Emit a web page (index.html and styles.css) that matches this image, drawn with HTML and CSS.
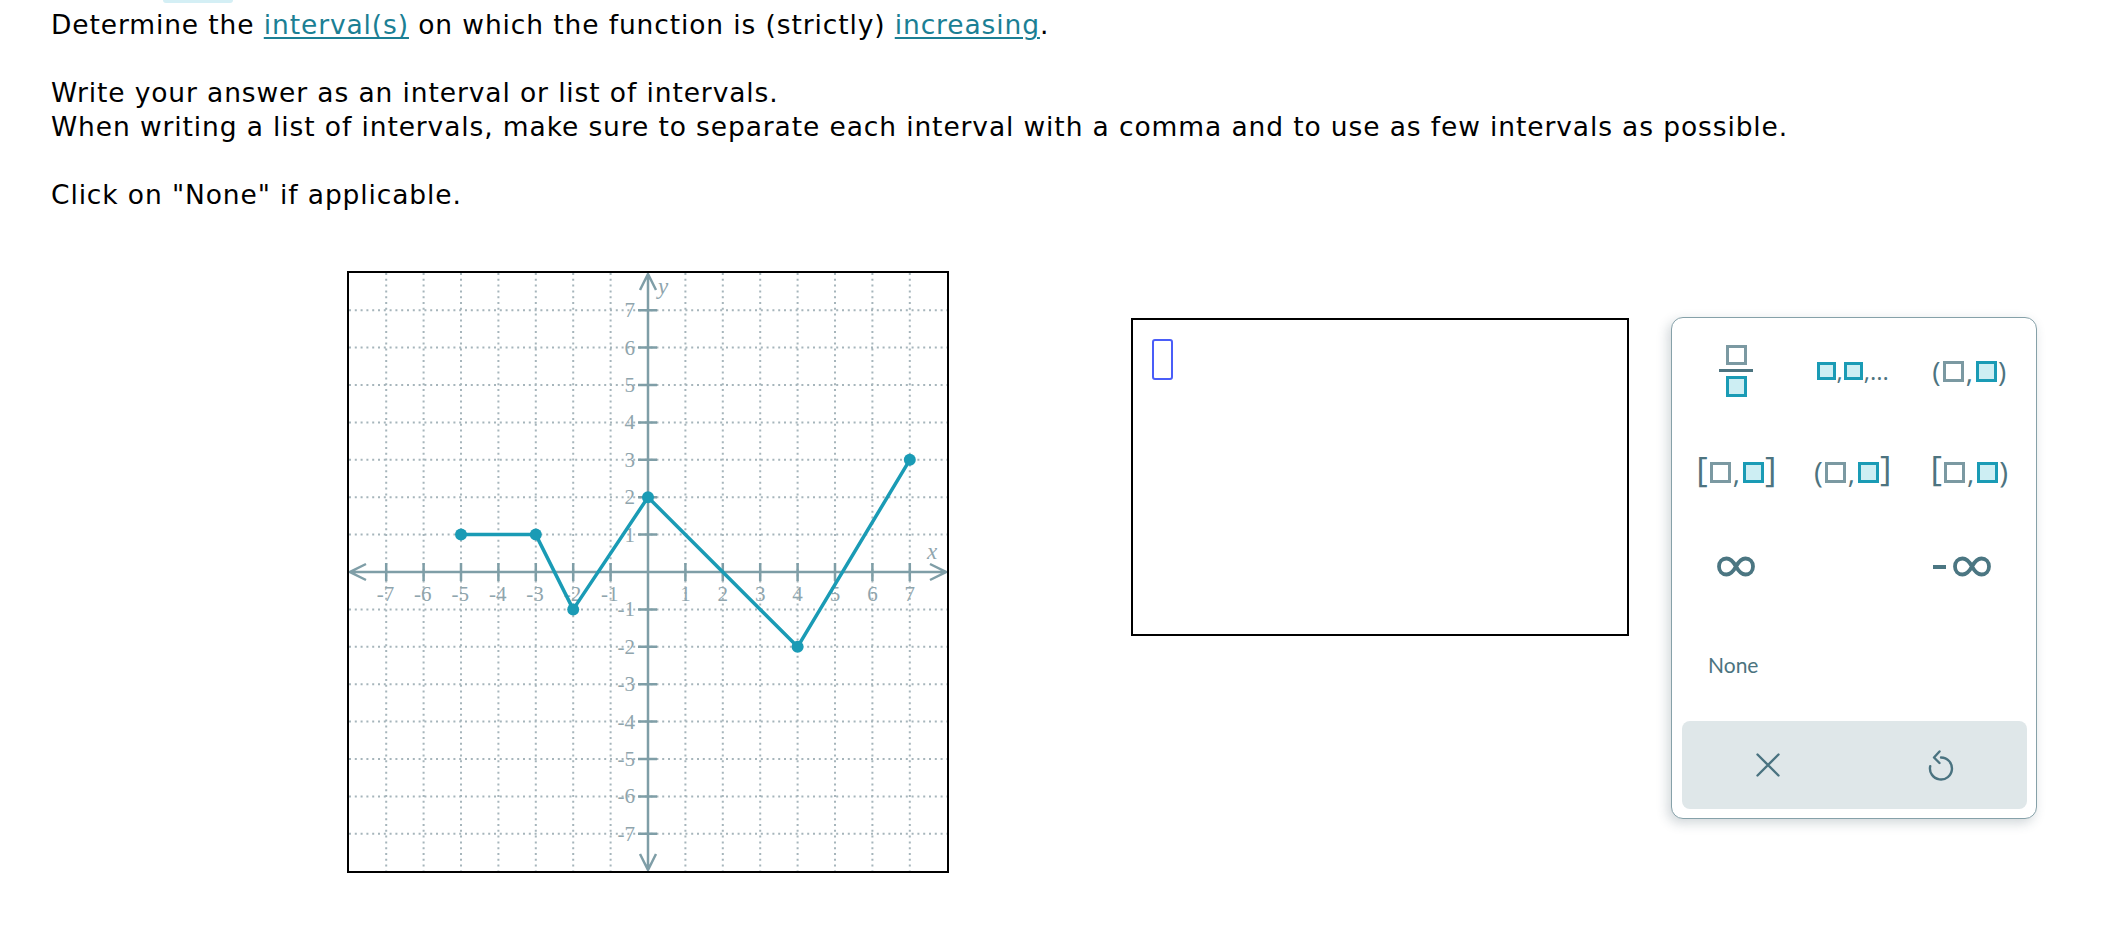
FILE: index.html
```html
<!DOCTYPE html>
<html>
<head>
<meta charset="utf-8">
<title>Increasing intervals</title>
<link rel="stylesheet" href="styles.css">
</head>
<body>
<div class="tip-sliver"></div>
<div class="page">
  <div class="prompt">
    <p>Determine the <a class="term" href="#">interval(s)</a> on which the function is (strictly) <a class="term" href="#">increasing</a>.</p>
    <p>Write your answer as an interval or list of intervals.<br>When writing a list of intervals, make sure to separate each interval with a comma and to use as few intervals as possible.</p>
    <p>Click on "None" if applicable.</p>
  </div>

  <div class="work">
    <div class="graph">
      <svg class="plot" width="598" height="598" viewBox="-299 -299 598 598">
        <path class="grid" d="M-261.8 -299V299M-224.4 -299V299M-187 -299V299M-149.6 -299V299M-112.2 -299V299M-74.8 -299V299M-37.4 -299V299M37.4 -299V299M74.8 -299V299M112.2 -299V299M149.6 -299V299M187 -299V299M224.4 -299V299M261.8 -299V299M-299 -261.8H299M-299 -224.4H299M-299 -187H299M-299 -149.6H299M-299 -112.2H299M-299 -74.8H299M-299 -37.4H299M-299 37.4H299M-299 74.8H299M-299 112.2H299M-299 149.6H299M-299 187H299M-299 224.4H299M-299 261.8H299"/>
        <path class="axis" d="M-298 0H298M0 -298V298M-282 -8L-298 0L-282 8M282 -8L298 0L282 8M-8 -282L0 -298L8 -282M-8 282L0 298L8 282"/>
        <path class="axis" d="M-261.8 -9V9M-224.4 -9V9M-187 -9V9M-149.6 -9V9M-112.2 -9V9M-74.8 -9V9M-37.4 -9V9M37.4 -9V9M74.8 -9V9M112.2 -9V9M149.6 -9V9M187 -9V9M224.4 -9V9M261.8 -9V9M-10 -261.8H9M-10 -224.4H9M-10 -187H9M-10 -149.6H9M-10 -112.2H9M-10 -74.8H9M-10 -37.4H9M-10 37.4H9M-10 74.8H9M-10 112.2H9M-10 149.6H9M-10 187H9M-10 224.4H9M-10 261.8H9"/>
        <g class="xlab neg">
          <text x="-253.8" y="22">-7</text>
          <text x="-216.4" y="22">-6</text>
          <text x="-179" y="22">-5</text>
          <text x="-141.6" y="22">-4</text>
          <text x="-104.2" y="22">-3</text>
          <text x="-66.8" y="22">-2</text>
          <text x="-29.4" y="22">-1</text>
        </g>
        <g class="xlab pos">
          <text x="37.4" y="22">1</text>
          <text x="74.8" y="22">2</text>
          <text x="112.2" y="22">3</text>
          <text x="149.6" y="22">4</text>
          <text x="187" y="22">5</text>
          <text x="224.4" y="22">6</text>
          <text x="261.8" y="22">7</text>
        </g>
        <g class="ylab">
          <text x="-13" y="-261.8">7</text>
          <text x="-13" y="-224.4">6</text>
          <text x="-13" y="-187">5</text>
          <text x="-13" y="-149.6">4</text>
          <text x="-13" y="-112.2">3</text>
          <text x="-13" y="-74.8">2</text>
          <text x="-13" y="-37.4">1</text>
          <text x="-13" y="37.4">-1</text>
          <text x="-13" y="74.8">-2</text>
          <text x="-13" y="112.2">-3</text>
          <text x="-13" y="149.6">-4</text>
          <text x="-13" y="187">-5</text>
          <text x="-13" y="224.4">-6</text>
          <text x="-13" y="261.8">-7</text>
        </g>
        <text class="varname" x="284" y="-21">x</text>
        <text class="varname" x="15" y="-286">y</text>
        <polyline class="curve" points="-187,-37.4 -112.2,-37.4 -74.8,37.4 0,-74.8 149.6,74.8 261.8,-112.2"/>
        <g class="dots">
          <circle cx="-187" cy="-37.4" r="6"/>
          <circle cx="-112.2" cy="-37.4" r="6"/>
          <circle cx="-74.8" cy="37.4" r="6"/>
          <circle cx="0" cy="-74.8" r="6"/>
          <circle cx="149.6" cy="74.8" r="6"/>
          <circle cx="261.8" cy="-112.2" r="6"/>
        </g>
      </svg>
    </div>

    <div class="answer">
      <div class="cursor"></div>
    </div>

    <div class="keypad">
      <div class="keys">
        <button class="key" type="button" aria-label="fraction">
          <span class="frac"><span class="sq"></span><span class="bar"></span><span class="sq t"></span></span>
        </button>
        <button class="key" type="button" aria-label="list">
          <span class="iv list"><span class="sq t s"></span><span class="cm">,</span><span class="sq t s"></span><span class="cm">,...</span></span>
        </button>
        <button class="key" type="button" aria-label="open interval">
          <span class="iv"><span class="br">(</span><span class="sq"></span><span class="cm">,</span><span class="sq t"></span><span class="br">)</span></span>
        </button>
        <button class="key" type="button" aria-label="closed interval">
          <span class="iv"><span class="br b">[</span><span class="sq"></span><span class="cm">,</span><span class="sq t"></span><span class="br b">]</span></span>
        </button>
        <button class="key" type="button" aria-label="left-open interval">
          <span class="iv"><span class="br p">(</span><span class="sq"></span><span class="cm">,</span><span class="sq t"></span><span class="br b">]</span></span>
        </button>
        <button class="key" type="button" aria-label="right-open interval">
          <span class="iv"><span class="br b">[</span><span class="sq"></span><span class="cm">,</span><span class="sq t"></span><span class="br p">)</span></span>
        </button>
        <button class="key" type="button" aria-label="infinity">
          <svg class="inf" width="38" height="21" viewBox="0 0 38 21"><path d="M19 10.5C16 5 13 2.5 9.5 2.5C5 2.5 2 6 2 10.5C2 15 5 18.5 9.5 18.5C13 18.5 16 16 19 10.5C22 5 25 2.5 28.5 2.5C33 2.5 36 6 36 10.5C36 15 33 18.5 28.5 18.5C25 18.5 22 16 19 10.5Z"/></svg>
        </button>
        <span class="key empty"></span>
        <button class="key" type="button" aria-label="negative infinity">
          <span class="neginf"><span class="dash"></span><svg class="inf" width="38" height="21" viewBox="0 0 38 21"><path d="M19 10.5C16 5 13 2.5 9.5 2.5C5 2.5 2 6 2 10.5C2 15 5 18.5 9.5 18.5C13 18.5 16 16 19 10.5C22 5 25 2.5 28.5 2.5C33 2.5 36 6 36 10.5C36 15 33 18.5 28.5 18.5C25 18.5 22 16 19 10.5Z"/></svg></span>
        </button>
        <button class="key none" type="button">None</button>
      </div>
      <div class="actions">
        <button class="act" type="button" aria-label="clear">
          <svg width="24" height="24" viewBox="0 0 24 24"><path class="ico" d="M1.5 1.5L22.5 22.5M22.5 1.5L1.5 22.5"/></svg>
        </button>
        <button class="act" type="button" aria-label="undo">
          <svg width="30" height="34" viewBox="0 0 30 34"><path class="ico" d="M15 9.5A11 11 0 1 1 4.2 18.2M13.5 3.5L8 9.5L13.5 15"/></svg>
        </button>
      </div>
    </div>
  </div>
</div>
</body>
</html>
```

FILE: styles.css
```css
html, body {
  margin: 0;
  padding: 0;
  background: #fff;
}

body {
  font-family: "DejaVu Sans", Verdana, sans-serif;
  color: #000;
  position: relative;
}

.tip-sliver {
  position: absolute;
  left: 163px;
  top: 0;
  width: 70px;
  height: 3px;
  background: #d4eff5;
  border-radius: 0 0 6px 6px;
}

.page {
  padding: 8px 0 0 51px;
}

.prompt p {
  margin: 0 0 34px;
  font-size: 26.5px;
  line-height: 34px;
  letter-spacing: 0.88px;
}

.prompt p:last-child {
  margin-bottom: 0;
}

.term {
  color: #1b7f94;
  text-decoration: underline;
  text-decoration-thickness: 2px;
  text-underline-offset: 3px;
}

.work {
  display: flex;
  align-items: flex-start;
  margin-top: 59px;
}

.graph {
  margin-left: 296px;
  width: 598px;
  height: 598px;
  border: 2px solid #000;
  flex: none;
}

.plot {
  display: block;
}

.grid {
  fill: none;
  stroke: #a6b5bb;
  stroke-width: 2;
  stroke-dasharray: 2 3.8;
}

.axis {
  fill: none;
  stroke: #7f9ea7;
  stroke-width: 2.5;
}

.xlab text,
.ylab text {
  font-family: "Liberation Serif", "Times New Roman", serif;
  font-size: 21px;
  fill: #8fa5ad;
  dominant-baseline: central;
}

.xlab.neg text {
  text-anchor: end;
}

.xlab.pos text {
  text-anchor: middle;
}

.ylab text {
  text-anchor: end;
}

.varname {
  font-family: "Liberation Serif", "Times New Roman", serif;
  font-style: italic;
  font-size: 23px;
  fill: #8fa5ad;
  text-anchor: middle;
  dominant-baseline: central;
}

.curve {
  fill: none;
  stroke: #1a9bb5;
  stroke-width: 3.5;
  stroke-linejoin: round;
  stroke-linecap: round;
}

.dots circle {
  fill: #1a9bb5;
}

.answer {
  margin-left: 182px;
  margin-top: 47px;
  width: 498px;
  height: 318px;
  box-sizing: border-box;
  border: 2px solid #000;
  padding: 19px;
  flex: none;
}

.cursor {
  width: 21px;
  height: 41px;
  box-sizing: border-box;
  border: 2.5px solid #4a5df8;
  border-radius: 3px;
}

.keypad {
  margin-left: 42px;
  margin-top: 46px;
  width: 366px;
  height: 502px;
  box-sizing: border-box;
  border: 1.5px solid #86a1a9;
  border-radius: 12px;
  padding: 3.5px 9px 8.5px 10px;
  background: #fff;
  box-shadow: -3px 4px 12px rgba(40, 70, 80, 0.22);
  display: flex;
  flex-direction: column;
  flex: none;
}

.keys {
  display: grid;
  grid-template-columns: repeat(3, 116.5px);
  grid-auto-rows: 98px;
  margin: 0 -1.5px 0 -4px;
}

.key {
  display: flex;
  align-items: center;
  justify-content: center;
  border: 0;
  background: transparent;
  padding: 0;
  margin: 0;
  color: #4d7480;
  cursor: pointer;
}

.sq {
  display: inline-block;
  width: 21px;
  height: 21px;
  box-sizing: border-box;
  border: 3px solid #7b99a2;
  background: #fff;
  vertical-align: baseline;
}

.sq.t {
  border-color: #1a9bb5;
  background: #cdeef3;
}

.sq.s {
  width: 19px;
  height: 18px;
}

.frac {
  display: flex;
  flex-direction: column;
  align-items: center;
  gap: 4px;
}

.frac .sq:first-child {
  height: 20px;
}

.bar {
  display: block;
  width: 34px;
  height: 3px;
  background: #4d7480;
}

.iv {
  font-family: "Open Sans", sans-serif;
  font-size: 28px;
  line-height: 1;
  color: #4d7480;
  white-space: nowrap;
}

.br {
  font-size: 28px;
}

.br.p {
  font-size: 30px;
}

.br.b {
  font-size: 35px;
  vertical-align: 1.5px;
}

.br:first-child {
  margin-right: 2px;
}

.br:last-child {
  margin-left: 1px;
}

.cm {
  margin: 0 3px 0 2px;
}

.list {
  font-size: 24px;
}

.list .cm {
  margin: 0 1px;
}

.list .cm:last-child {
  margin-right: 0;
}

.inf {
  display: block;
}

.inf path {
  fill: none;
  stroke: #4b7682;
  stroke-width: 3.8;
}

.neginf {
  display: flex;
  align-items: center;
  gap: 7px;
  margin-right: 15px;
}

.dash {
  display: block;
  width: 13px;
  height: 4px;
  background: #4b7682;
}

.none {
  font-family: Lato, "Open Sans", sans-serif;
  font-size: 21px;
  color: #4b7480;
  padding-right: 6px;
}

.actions {
  margin-top: 7px;
  height: 88px;
  background: #dfe7e9;
  border-radius: 8px;
  display: flex;
}

.act {
  flex: 1;
  display: flex;
  align-items: center;
  justify-content: center;
  border: 0;
  background: transparent;
  padding: 0;
  cursor: pointer;
}

.ico {
  fill: none;
  stroke: #4a7380;
  stroke-width: 2.4;
  stroke-linecap: round;
  stroke-linejoin: round;
}
```
